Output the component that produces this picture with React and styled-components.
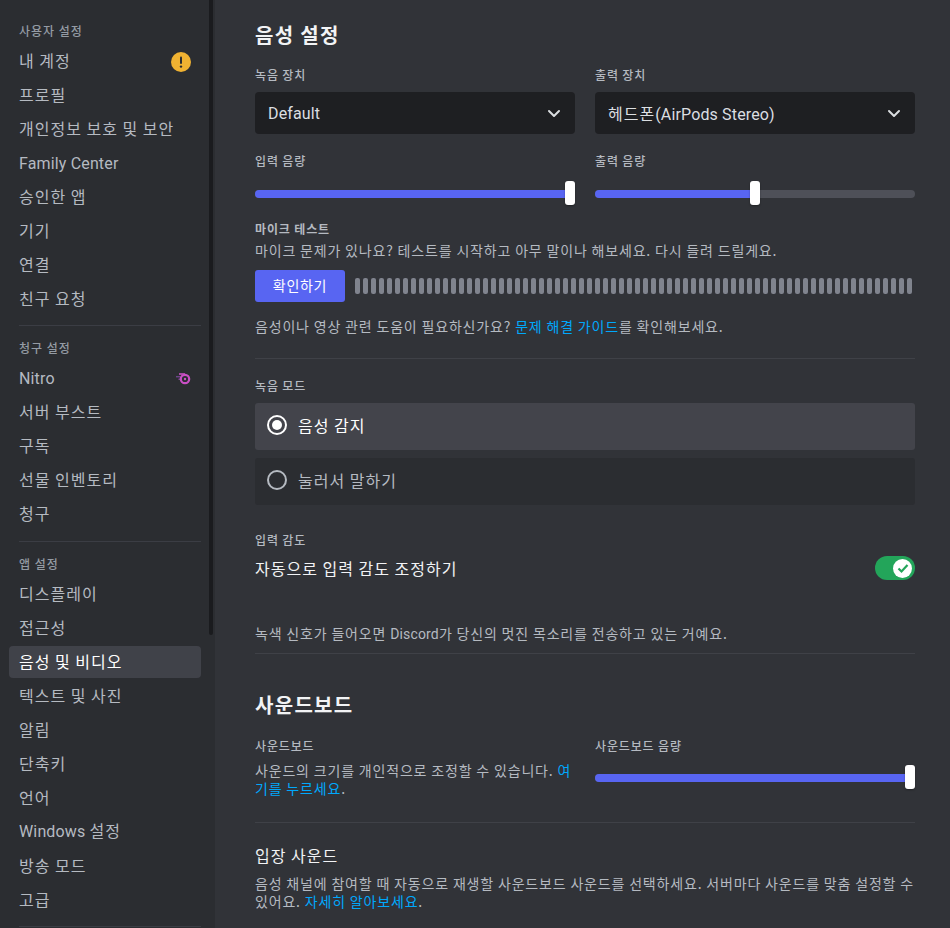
import React from "react";
import styled, { createGlobalStyle } from "styled-components";

const GlobalStyle = createGlobalStyle`
    html, body {
        margin: 0;
        padding: 0;
        background: #313338;
    }
    body {
        font-family: "Noto Sans CJK KR", "Noto Sans", sans-serif;
    }
    * {
        box-sizing: border-box;
    }
`;

const Page = styled.div`
    position: relative;
    display: flex;
    width: 950px;
    height: 928px;
    overflow: hidden;
    background: #313338;
`;

const Sidebar = styled.nav`
    position: relative;
    flex: 0 0 215px;
    padding: 17px 14px 0 9px;
    background: #2b2d31;
`;

const ScrollThumb = styled.div`
    position: absolute;
    top: 0;
    left: 209px;
    width: 4px;
    height: 635px;
    border-radius: 0 0 2px 2px;
    background: #1a1b1e;
`;

const Latin = styled.span`
    font-family: Roboto, sans-serif;
    font-weight: 400;
    letter-spacing: 0.15px;
`;

const SideLabel = styled.div`
    padding: 6px 10px;
    font-size: 12px;
    line-height: 16px;
    font-weight: 500;
    letter-spacing: 1px;
    color: #949ba4;
`;

const SideItem = styled.div`
    display: flex;
    align-items: center;
    justify-content: space-between;
    height: 32px;
    margin-bottom: 2px;
    padding: 0 10px 2px;
    border-radius: 4px;
    font-size: 16px;
    line-height: 20px;
    letter-spacing: 1px;
    color: ${(p) => (p.$active ? "#ffffff" : "#b5bac1")};
    background: ${(p) => (p.$active ? "#404249" : "transparent")};

    > ${Latin} {
        padding-top: 4px;
    }

    svg {
        margin-top: 4px;
    }
`;

const SideDivider = styled.div`
    height: 1px;
    margin: ${(p) => p.$top}px 0 8px 10px;
    background: #3b3d44;
`;

const Main = styled.main`
    flex: 1;
    padding: 22px 35px 0 40px;
`;

const Title = styled.h2`
    margin: ${(p) => p.$mt || 0} 0 0;
    font-size: 20px;
    line-height: 26px;
    font-weight: 700;
    letter-spacing: 1.3px;
    color: #f2f3f5;
`;

const Columns = styled.div`
    display: grid;
    grid-template-columns: 320px 320px;
    column-gap: 20px;
    margin-top: ${(p) => p.$mt || 0};
`;

const Label = styled.div`
    font-size: 12px;
    line-height: 16px;
    font-weight: ${(p) => (p.$bold ? 700 : 500)};
    letter-spacing: 0.85px;
    color: #b5bac1;
    margin-top: ${(p) => p.$mt || 0};
    margin-bottom: ${(p) => p.$mb || "9px"};
`;

const Select = styled.div`
    display: flex;
    align-items: center;
    justify-content: space-between;
    height: 42px;
    margin-top: 1px;
    padding: 0 9px 0 13px;
    border-radius: 4px;
    background: #1e1f22;
    font-size: 16px;
    letter-spacing: 1px;
    color: #dbdee1;
`;

const SliderWrap = styled.div`
    position: relative;
    height: 8px;
    margin-top: ${(p) => p.$mt || "21px"};
    border-radius: 4px;
    background: #4e5058;
`;

const SliderFill = styled.div`
    height: 100%;
    border-radius: 4px;
    background: #5865f2;
`;

const Grabber = styled.div`
    position: absolute;
    top: -9px;
    width: 10px;
    height: 24px;
    margin-left: -5px;
    border-radius: 3px;
    background: #ffffff;
    box-shadow: 0 1px 2px rgba(0, 0, 0, 0.35);
`;

const Body = styled.p`
    margin: ${(p) => p.$mt || 0} 0 0;
    font-size: 14px;
    line-height: 18px;
    letter-spacing: 0.82px;
    word-break: ${(p) => (p.$breakAll ? "break-all" : "normal")};
    color: #b5bac1;
`;

const Link = styled.a`
    color: #00a8fc;
`;

const TestRow = styled.div`
    display: flex;
    align-items: center;
    margin-top: 11px;
`;

const Button = styled.div`
    display: flex;
    align-items: center;
    justify-content: center;
    width: 90px;
    height: 32px;
    padding-bottom: 2px;
    border-radius: 3px;
    background: #5865f2;
    font-size: 14px;
    letter-spacing: 0.7px;
    color: #ffffff;
`;

const Bars = styled.div`
    display: flex;
    gap: 3px;
    margin-left: 10px;
`;

const Bar = styled.div`
    width: 5px;
    height: 16px;
    border-radius: 2px;
    background: #80848e;
`;

const Divider = styled.div`
    height: 1px;
    margin-top: ${(p) => p.$mt || 0};
    background: #3f4147;
`;

const RadioRow = styled.div`
    display: flex;
    align-items: center;
    height: 47px;
    margin-bottom: 8px;
    padding: 0 12px 3px;
    border-radius: 3px;
    background: ${(p) => (p.$on ? "#43444b" : "#2b2d31")};
    font-size: 16px;
    letter-spacing: 1px;
    color: ${(p) => (p.$on ? "#ffffff" : "#b5bac1")};
`;

const RadioDot = styled.span`
    position: relative;
    display: block;
    flex: none;
    width: 20px;
    height: 20px;
    margin-right: 11px;
    border: 2px solid ${(p) => (p.$on ? "#ffffff" : "#b5bac1")};
    border-radius: 50%;

    &::after {
        content: "";
        display: ${(p) => (p.$on ? "block" : "none")};
        position: absolute;
        inset: 3px;
        border-radius: 50%;
        background: #ffffff;
    }
`;

const SwitchRow = styled.div`
    display: flex;
    align-items: center;
    justify-content: space-between;
    height: 24px;
    font-size: 16px;
    letter-spacing: 1px;
    color: #f2f3f5;
`;

const Toggle = styled.div`
    display: flex;
    align-items: center;
    justify-content: flex-end;
    width: 40px;
    height: 24px;
    padding-right: 3px;
    border-radius: 12px;
    background: #23a55a;
`;

const Knob = styled.div`
    display: flex;
    align-items: center;
    justify-content: center;
    width: 19px;
    height: 19px;
    border-radius: 50%;
    background: #ffffff;
`;

const SubTitle = styled.h3`
    margin: 22px 0 0;
    font-size: 16px;
    line-height: 20px;
    font-weight: 400;
    letter-spacing: 1px;
    color: #f2f3f5;
`;

const Chevron = () => (
    <svg width="24" height="24" viewBox="0 0 24 24" fill="none">
        <path
            d="M7 10l5 5 5-5"
            stroke="#dbdee1"
            strokeWidth="2"
            strokeLinecap="round"
            strokeLinejoin="round"
        />
    </svg>
);

const WarnIcon = () => (
    <svg width="20" height="20" viewBox="0 0 20 20">
        <circle cx="10" cy="10" r="10" fill="#f0b232" />
        <rect x="9" y="4.5" width="2" height="7.5" rx="1" fill="#2b2d31" />
        <circle cx="10" cy="14.6" r="1.2" fill="#2b2d31" />
    </svg>
);

const NitroIcon = () => (
    <svg width="15" height="12" viewBox="0 0 15 12" fill="none">
        <path d="M3 1h6" stroke="#c94fc4" strokeWidth="1.6" />
        <path d="M0 3.8h4.5" stroke="#8a4fb0" strokeWidth="1" />
        <path d="M2.5 6.2h2.5" stroke="#a64bbf" strokeWidth="1" />
        <circle cx="9" cy="6" r="4.2" stroke="#c94fc4" strokeWidth="2.2" />
        <circle cx="9" cy="6" r="1.2" fill="#c94fc4" />
    </svg>
);

const CheckIcon = () => (
    <svg width="14" height="14" viewBox="0 0 14 14" fill="none">
        <path
            d="M2.5 7.5l3 3 6-6.5"
            stroke="#23a55a"
            strokeWidth="2.2"
        />
    </svg>
);

const Slider = ({ value, mt }) => (
    <SliderWrap $mt={mt}>
        <SliderFill style={{ width: `${value}%` }} />
        <Grabber style={{ left: `calc(${value}% ${value === 100 ? "- 5px" : "+ 0px"})` }} />
    </SliderWrap>
);

const menu = [
    {
        title: "사용자 설정",
        top: 10,
        items: ["내 계정", "프로필", "개인정보 보호 및 보안", "Family Center", "승인한 앱", "기기", "연결", "친구 요청"],
    },
    {
        title: "청구 설정",
        top: 11,
        items: ["Nitro", "서버 부스트", "구독", "선물 인벤토리", "청구"],
    },
    {
        title: "앱 설정",
        top: 10,
        items: ["디스플레이", "접근성", "음성 및 비디오", "텍스트 및 사진", "알림", "단축키", "언어", "Windows 설정", "방송 모드", "고급"],
    },
];

const bars = Array.from({ length: 70 }, (_, i) => i);

const itemLabel = (item) => {
    if (item === "Family Center" || item === "Nitro") return <Latin>{item}</Latin>;
    if (item === "Windows 설정") {
        return (
            <span>
                <Latin>Windows </Latin>설정
            </span>
        );
    }
    return item;
};

export default function App() {
    return (
        <Page>
            <GlobalStyle />
            <Sidebar>
                {menu.map((group) => (
                    <React.Fragment key={group.title}>
                        <SideLabel>{group.title}</SideLabel>
                        {group.items.map((item) => (
                            <SideItem key={item} $active={item === "음성 및 비디오"}>
                                {itemLabel(item)}
                                {item === "내 계정" && <WarnIcon />}
                                {item === "Nitro" && <NitroIcon />}
                            </SideItem>
                        ))}
                        <SideDivider $top={group.top} />
                    </React.Fragment>
                ))}
            </Sidebar>
            <ScrollThumb />
            <Main>
                <Title>음성 설정</Title>
                <Columns $mt="19px">
                    <div>
                        <Label>녹음 장치</Label>
                        <Select>
                            <Latin>Default</Latin>
                            <Chevron />
                        </Select>
                        <Label $mt="19px">입력 음량</Label>
                        <Slider value={100} />
                    </div>
                    <div>
                        <Label>출력 장치</Label>
                        <Select>
                            <span>
                                헤드폰<Latin>(AirPods Stereo)</Latin>
                            </span>
                            <Chevron />
                        </Select>
                        <Label $mt="19px">출력 음량</Label>
                        <Slider value={50} />
                    </div>
                </Columns>
                <Label $bold $mt="23px" $mb="4px">마이크 테스트</Label>
                <Body>마이크 문제가 있나요? 테스트를 시작하고 아무 말이나 해보세요. 다시 들려 드릴게요.</Body>
                <TestRow>
                    <Button>확인하기</Button>
                    <Bars>
                        {bars.map((i) => (
                            <Bar key={i} />
                        ))}
                    </Bars>
                </TestRow>
                <Body $mt="15px">
                    음성이나 영상 관련 도움이 필요하신가요? <Link>문제 해결 가이드</Link>를 확인해보세요.
                </Body>
                <Divider $mt="23px" />
                <Label $mt="19px">녹음 모드</Label>
                <RadioRow $on>
                    <RadioDot $on />
                    음성 감지
                </RadioRow>
                <RadioRow>
                    <RadioDot />
                    눌러서 말하기
                </RadioRow>
                <Label $mt="27px" $mb="8px">입력 감도</Label>
                <SwitchRow>
                    자동으로 입력 감도 조정하기
                    <Toggle>
                        <Knob>
                            <CheckIcon />
                        </Knob>
                    </Toggle>
                </SwitchRow>
                <Body $mt="44px">
                    녹색 신호가 들어오면 <Latin>Discord</Latin>가 당신의 멋진 목소리를 전송하고 있는 거예요.
                </Body>
                <Divider $mt="10px" />
                <Title $mt="38px">사운드보드</Title>
                <Columns $mt="20px">
                    <div>
                        <Label $mb="7px">사운드보드</Label>
                        <Body $breakAll>
                            사운드의 크기를 개인적으로 조정할 수 있습니다. <Link>여기를 누르세요</Link>.
                        </Body>
                    </div>
                    <div>
                        <Label>사운드보드 음량</Label>
                        <Slider value={100} mt="20px" />
                    </div>
                </Columns>
                <Divider $mt="25px" />
                <SubTitle>입장 사운드</SubTitle>
                <Body $mt="9px">
                    음성 채널에 참여할 때 자동으로 재생할 사운드보드 사운드를 선택하세요. 서버마다 사운드를 맞춤 설정할 수 있어요. <Link>자세히 알아보세요</Link>.
                </Body>
            </Main>
        </Page>
    );
}
